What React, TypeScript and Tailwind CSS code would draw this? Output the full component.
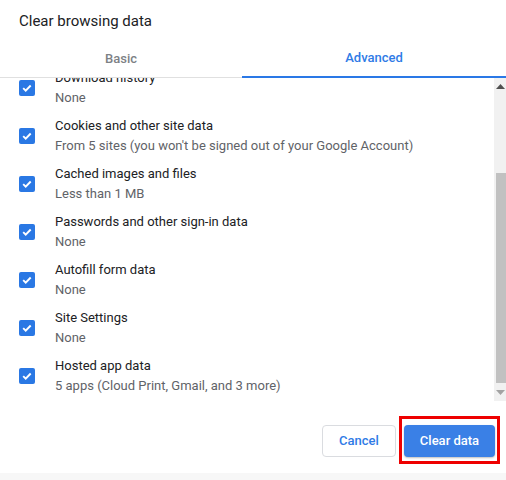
const rows = [
  { title: "Download history", detail: "None" },
  { title: "Cookies and other site data", detail: "From 5 sites (you won't be signed out of your Google Account)" },
  { title: "Cached images and files", detail: "Less than 1 MB" },
  { title: "Passwords and other sign-in data", detail: "None" },
  { title: "Autofill form data", detail: "None" },
  { title: "Site Settings", detail: "None" },
  { title: "Hosted app data", detail: "5 apps (Cloud Print, Gmail, and 3 more)" },
];

function CheckBox() {
  return (
    <div className="flex w-[16px] h-[16px] shrink-0 items-center justify-center rounded-[2px] bg-[#2a78e4]">
      <svg width="12" height="12" viewBox="0 0 12 12" fill="none">
        <path d="M2.2 6.2l2.5 2.5 5-5.2" stroke="white" strokeWidth="1.9" />
      </svg>
    </div>
  );
}

export default function App() {
  return (
    <div className="flex flex-col w-[506px] h-[480px] bg-white overflow-hidden font-['Roboto',sans-serif]">
      <div className="h-[40px] pl-[19px] pt-[11px] text-[15px] leading-[20px] text-[#202124]">
        Clear browsing data
      </div>

      <div className="flex h-[38px] border-b border-[#e0e0e0]">
        <div className="flex w-[242px] items-center justify-center text-[13px] font-medium text-[#7d8185]">
          Basic
        </div>
        <div className="flex flex-1 items-center justify-center text-[13px] font-medium text-[#2f7be6] border-b-2 border-[#2a78e6] -mb-px">
          Advanced
        </div>
      </div>

      <div className="flex h-[323px]">
        <div className="flex-1 overflow-hidden">
          {/* list is scrolled a little past the first entry */}
          <div className="-mt-[14px]">
            {rows.map((r) => (
              <div key={r.title} className="flex items-center h-[48px] pl-[19px] gap-[20px]">
                <CheckBox />
                <div className="flex flex-col text-[13px] leading-[20px]">
                  <span className="text-[#202124]">{r.title}</span>
                  <span className="text-[#5f6368]">{r.detail}</span>
                </div>
              </div>
            ))}
          </div>
        </div>

        {/* scrollbar */}
        <div className="flex flex-col w-[12px] bg-[#f1f1f1]">
          <div className="flex h-[17px] items-center justify-end pr-[1px]">
            <svg width="9" height="5" viewBox="0 0 9 5">
              <path d="M0 5L4.5 0 9 5z" fill="#505050" />
            </svg>
          </div>
          <div className="h-[78px]" />
          <div className="h-[210px] ml-[2px] bg-[#c1c1c1]" />
          <div className="flex flex-1 items-center justify-end pr-[1px]">
            <svg width="9" height="5" viewBox="0 0 9 5">
              <path d="M0 0L4.5 5 9 0z" fill="#a3a3a3" />
            </svg>
          </div>
        </div>
      </div>

      <div className="flex h-[72px] items-start justify-end gap-[8px] pt-[24px] pr-[11px]">
        <button className="h-[32px] w-[74px] rounded-[4px] border border-[#dadce0] bg-white text-[13px] font-medium text-[#2f7be6]">
          Cancel
        </button>
        <div className="relative">
          <button className="h-[32px] w-[91px] rounded-[4px] bg-[#3a80e6] text-[13px] font-medium text-white shadow-[0_1px_2px_rgba(0,0,0,0.25)]">
            Clear data
          </button>
          <span className="absolute -left-[5px] -right-[5px] -top-[9px] -bottom-[7px] border-[3px] border-[#ee0000]" />
        </div>
      </div>

      <div className="flex-1 bg-[#f7f7f7]" />
    </div>
  );
}
